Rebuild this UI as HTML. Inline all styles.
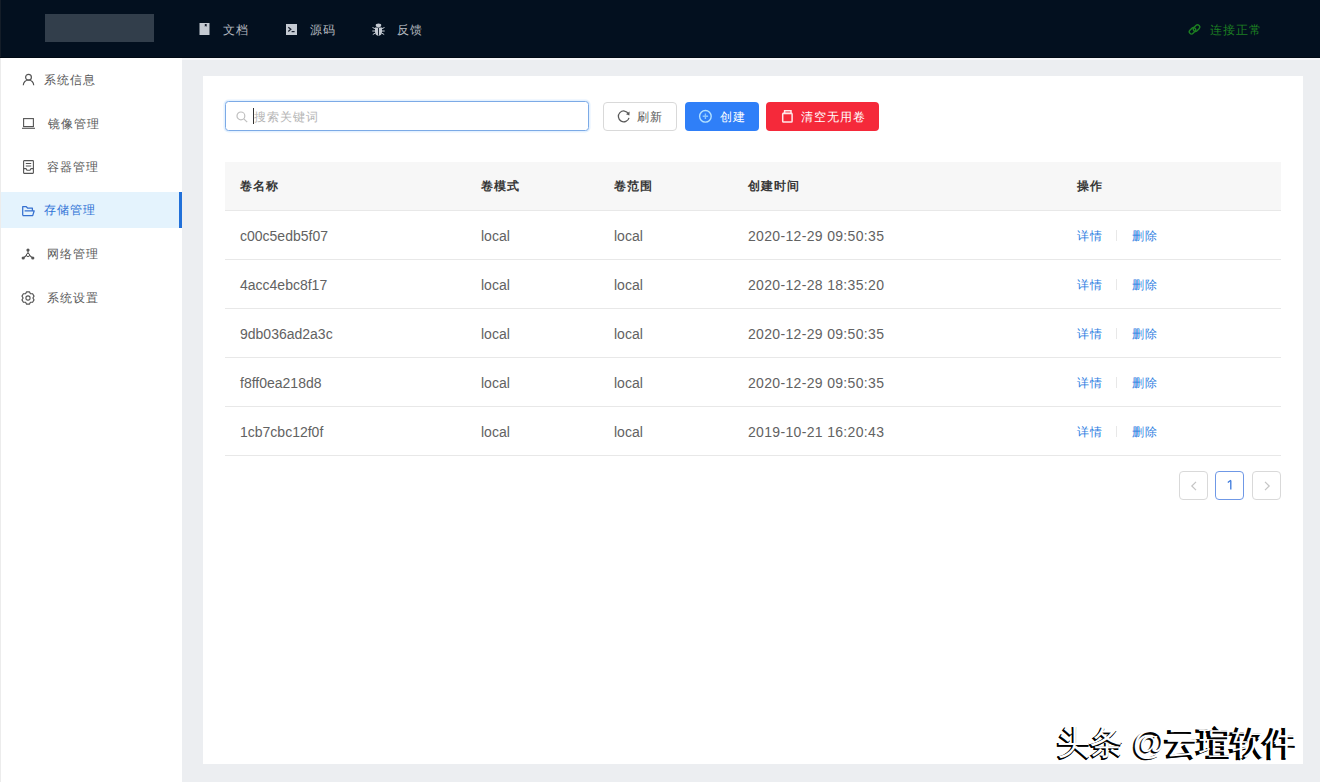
<!DOCTYPE html>
<html><head><meta charset="utf-8">
<style>
*{box-sizing:border-box;margin:0;padding:0}
html,body{width:1320px;height:782px;overflow:hidden;background:#eceef1;font-family:"Liberation Sans",sans-serif;font-size:14px;color:#595959}
.a{position:absolute;white-space:nowrap}
.cj{font-size:12px;line-height:16px;letter-spacing:.9px}
#hdr{position:absolute;left:0;top:0;width:1320px;height:58px;background:#03101f}
#logo{position:absolute;left:45px;top:14px;width:109px;height:28px;background:#323e4b}
.nav{color:#b3b8bf;top:22px}
#side{position:absolute;left:0;top:58px;width:182px;height:724px;background:#fff}
.mt{left:47px}
#card{position:absolute;left:203px;top:76px;width:1100px;height:688px;background:#fff}
#search{position:absolute;left:224.5px;top:101px;width:364.5px;height:30px;border:1.8px solid #7caae6;border-radius:3.5px;box-shadow:0 0 0 1.5px rgba(150,205,255,.25);background:#fff}
.btn{position:absolute;top:102px;height:29px;border-radius:4px}
.th{font-weight:bold;color:#383838;top:178px}
.row{position:absolute;left:225px;width:1056px;height:49px;border-bottom:1px solid #e8e8e8}
.c{position:absolute;top:17px;line-height:16px;white-space:nowrap;color:#626262}
.dt{letter-spacing:.33px}
.lk{color:#2a7de1;font-size:12px;letter-spacing:.9px;top:17px}
.sep{position:absolute;left:891px;top:19px;width:1px;height:11px;background:#e8e8e8}
.pg{position:absolute;top:471px;width:29px;height:29px;border:1px solid #d9d9d9;border-radius:4px}
</style></head><body>
<div id="hdr">
  <div id="logo"></div>
  <svg class="a" style="left:199px;top:23px" width="11" height="12" viewBox="0 0 11 12"><rect x="0.5" y="0" width="10" height="12" fill="#c4cad2"/><path d="M5.8 0.9h1.9v2.8L6.75 3 5.8 3.7z" fill="#1a2230"/></svg>
  <div class="a cj nav" style="left:223px">文档</div>
  <svg class="a" style="left:286px;top:24px" width="11" height="11" viewBox="0 0 11 11"><rect width="11" height="11" fill="#c4cad2"/><path d="M2.3 3.2 4.8 5.3 2.3 7.4" stroke="#1a2230" stroke-width="1.3" fill="none"/><rect x="5.6" y="7" width="3" height="1.2" fill="#1a2230"/></svg>
  <div class="a cj nav" style="left:310px">源码</div>
  <svg class="a" style="left:372px;top:23px" width="13" height="13" viewBox="0 0 13 13"><ellipse cx="6.5" cy="2.3" rx="2.8" ry="1.9" fill="#c4cad2"/><path d="M3 4.6h7v4.4c0 2.2-1.6 3.8-3.5 3.8S3 11.2 3 9z" fill="#c4cad2"/><path d="M6.5 5v7.5" stroke="#03101f" stroke-width=".9"/><path d="M0.5 4.5 3 5.6M12.5 4.5 10 5.6M0.3 8h2.7M12.7 8H10M0.8 11.5 3.2 10.2M12.2 11.5 9.8 10.2" stroke="#c4cad2" stroke-width="1"/></svg>
  <div class="a cj nav" style="left:397px">反馈</div>
  <svg class="a" style="left:1188px;top:23px" width="13" height="13" viewBox="0 0 13 13"><g fill="none" stroke="#1d7f22" stroke-width="1.4"><rect x="0.9" y="5.6" width="7.2" height="4.4" rx="2.2" transform="rotate(-45 4.5 7.8)"/><rect x="4.9" y="2.9" width="7.2" height="4.4" rx="2.2" transform="rotate(-45 8.5 5.1)"/></g></svg>
  <div class="a cj" style="left:1210px;top:22px;color:#1d7f22">连接正常</div>
</div>
<div id="side">
  <svg class="a" style="left:22px;top:15px" width="13" height="13" viewBox="0 0 13 13"><g fill="none" stroke="#555" stroke-width="1.2"><circle cx="6.5" cy="4.3" r="2.9"/><path d="M1.3 12.2a5.2 5.2 0 0 1 10.4 0"/></g></svg>
  <div class="a cj" style="left:44px;top:14px">系统信息</div>
  <svg class="a" style="left:22px;top:60px" width="13" height="11" viewBox="0 0 13 11"><g fill="none" stroke="#555" stroke-width="1.1"><rect x="1.6" y="0.6" width="9.8" height="8"/><path d="M0 10.3h13"/></g><rect x="1.5" y="8" width="10" height="1" fill="#555"/></svg>
  <div class="a cj mt" style="left:48px;top:58px">镜像管理</div>
  <svg class="a" style="left:23px;top:102px" width="11" height="14" viewBox="0 0 11 14"><g fill="none" stroke="#555" stroke-width="1.1"><rect x="0.6" y="0.6" width="9.8" height="12.8" rx=".6"/><path d="M2.8 3.5h5.4M2.8 6h5.4M0.6 8.6h2.4l1 1.6h3l1-1.6h2.4"/></g></svg>
  <div class="a cj mt" style="left:47px;top:101px">容器管理</div>
  <div class="a" style="left:0;top:134px;width:182px;height:36px;background:#e4f3fd"></div>
  <div class="a" style="left:179px;top:134px;width:3px;height:36px;background:#2170d9"></div>
  <svg class="a" style="left:21.5px;top:147.5px" width="14" height="11" viewBox="0 0 14 11"><path d="M0.7 9.6V0.7h3.6l1.5 1.5h4.6v2.5M2.6 4.8H12.2L10.7 9.6H0.7" fill="none" stroke="#3570d0" stroke-width="1.25" stroke-linejoin="round"/></svg>
  <div class="a cj" style="left:44px;top:144px;color:#2f72d6">存储管理</div>
  <svg class="a" style="left:21px;top:190px" width="14" height="12" viewBox="0 0 14 12"><g fill="none" stroke="#555" stroke-width="1.1"><path d="M7 2.8v3.2M7 6 3 9.5M7 6l4 3.5"/></g><g fill="#555"><circle cx="7" cy="2" r="1.6"/><circle cx="2.2" cy="10" r="1.6"/><circle cx="11.8" cy="10" r="1.6"/></g><circle cx="7" cy="7" r="1.6" fill="#fff" stroke="#555" stroke-width="1"/></svg>
  <div class="a cj mt" style="left:47px;top:188px">网络管理</div>
  <svg class="a" style="left:21px;top:233px" width="14" height="14" viewBox="0 0 14 14"><path d="M5.58 0.86 L8.42 0.86 L9.45 2.76 L11.61 2.70 L13.02 5.16 L11.90 7.00 L13.02 8.84 L11.61 11.30 L9.45 11.24 L8.42 13.14 L5.58 13.14 L4.55 11.24 L2.39 11.30 L0.98 8.84 L2.10 7.00 L0.98 5.16 L2.39 2.70 L4.55 2.76Z" fill="none" stroke="#555" stroke-width="1.15" stroke-linejoin="round"/><circle cx="7" cy="7" r="2.1" fill="none" stroke="#555" stroke-width="1.1"/></svg>
  <div class="a cj mt" style="left:47px;top:232px">系统设置</div>
</div>
<div id="card"></div>
<div class="a" style="left:182px;top:58px;width:1138px;height:2px;background:#f6f7f9"></div>
<div class="a" style="left:0;top:58px;width:1px;height:724px;background:#ececec"></div>
<div class="a" style="left:0;top:0;width:1px;height:58px;background:#141d28"></div>
<div class="a" style="left:0;top:57px;width:1320px;height:1px;background:#010a14"></div>
<div id="search"></div>
<svg class="a" style="left:236px;top:111px" width="12" height="12" viewBox="0 0 12 12"><g fill="none" stroke="#bfbfbf" stroke-width="1.2"><circle cx="4.9" cy="4.9" r="3.9"/><path d="M7.8 7.8 11.2 11.2"/></g></svg>
<div class="a" style="left:253px;top:108px;width:1px;height:16px;background:#333"></div>
<div class="a cj" style="left:254px;top:109px;color:#b5b5b5">搜索关键词</div>
<div class="btn" style="left:603px;width:74px;border:1px solid #d9d9d9;background:#fff"></div>
<svg class="a" style="left:612px;top:105px" width="24" height="22" viewBox="0 0 24 22"><path d="M16.4 8.6A5.4 5.4 0 1 0 17 12.8" fill="none" stroke="#595959" stroke-width="1.25"/><path d="M17.6 6.6 17.4 10.4 14 9.2Z" fill="#595959"/></svg>
<div class="a cj" style="left:637px;top:109px">刷新</div>
<div class="btn" style="left:685px;width:74px;background:#2f7ff8"></div>
<svg class="a" style="left:694px;top:105px" width="22" height="22" viewBox="0 0 22 22"><circle cx="11.4" cy="11.3" r="5.8" fill="none" stroke="#b4e2ff" stroke-width="1.4"/><path d="M11.4 8.6v5.4M8.7 11.3h5.4" stroke="#8cc6ff" stroke-width="1.4"/></svg>
<div class="a cj" style="left:720px;top:109px;color:#fff">创建</div>
<div class="btn" style="left:766px;width:113px;background:#f5293a"></div>
<svg class="a" style="left:776px;top:106px" width="22" height="20" viewBox="0 0 22 20"><g fill="none" stroke="#ffe8ea" stroke-width="1.5"><rect x="6.7" y="7.4" width="9.4" height="8.6" rx=".8"/><path d="M8.6 7.2V4.8h6.4v2.4"/><path d="M6.6 7.3h9.6"/></g></svg>
<div class="a cj" style="left:801px;top:109px;color:#fff">清空无用卷</div>
<div class="a" style="left:225px;top:162px;width:1056px;height:49px;background:#f7f7f7;border-bottom:1px solid #e8e8e8"></div>
<div class="a cj th" style="left:240px">卷名称</div>
<div class="a cj th" style="left:481px">卷模式</div>
<div class="a cj th" style="left:614px">卷范围</div>
<div class="a cj th" style="left:748px">创建时间</div>
<div class="a cj th" style="left:1077px">操作</div>
<div class="row" style="top:211px"><span class="c" style="left:15px">c00c5edb5f07</span><span class="c" style="left:256px">local</span><span class="c" style="left:389px">local</span><span class="c dt" style="left:523px">2020-12-29 09:50:35</span><span class="c lk" style="left:852px">详情</span><i class="sep"></i><span class="c lk" style="left:907px">删除</span></div>
<div class="row" style="top:260px"><span class="c" style="left:15px">4acc4ebc8f17</span><span class="c" style="left:256px">local</span><span class="c" style="left:389px">local</span><span class="c dt" style="left:523px">2020-12-28 18:35:20</span><span class="c lk" style="left:852px">详情</span><i class="sep"></i><span class="c lk" style="left:907px">删除</span></div>
<div class="row" style="top:309px"><span class="c" style="left:15px">9db036ad2a3c</span><span class="c" style="left:256px">local</span><span class="c" style="left:389px">local</span><span class="c dt" style="left:523px">2020-12-29 09:50:35</span><span class="c lk" style="left:852px">详情</span><i class="sep"></i><span class="c lk" style="left:907px">删除</span></div>
<div class="row" style="top:358px"><span class="c" style="left:15px">f8ff0ea218d8</span><span class="c" style="left:256px">local</span><span class="c" style="left:389px">local</span><span class="c dt" style="left:523px">2020-12-29 09:50:35</span><span class="c lk" style="left:852px">详情</span><i class="sep"></i><span class="c lk" style="left:907px">删除</span></div>
<div class="row" style="top:407px"><span class="c" style="left:15px">1cb7cbc12f0f</span><span class="c" style="left:256px">local</span><span class="c" style="left:389px">local</span><span class="c dt" style="left:523px">2019-10-21 16:20:43</span><span class="c lk" style="left:852px">详情</span><i class="sep"></i><span class="c lk" style="left:907px">删除</span></div>

<div class="pg" style="left:1179px"></div>
<div class="pg" style="left:1215px;border-color:#6f98e6"></div>
<div class="pg" style="left:1252px"></div>
<svg class="a" style="left:1190px;top:481px" width="8" height="10" viewBox="0 0 8 10"><path d="M6 0.8 1.8 5 6 9.2" fill="none" stroke="#c4c4c4" stroke-width="1.2"/></svg>
<svg class="a" style="left:1226px;top:479px" width="8" height="12" viewBox="0 0 8 12"><path d="M4.8 1.4V10.6" stroke="#3a78dc" stroke-width="1.3"/><path d="M1.8 3.6 4.8 1.3" stroke="#3a78dc" stroke-width="1.2"/></svg>
<svg class="a" style="left:1263px;top:481px" width="8" height="10" viewBox="0 0 8 10"><path d="M2 0.8 6.2 5 2 9.2" fill="none" stroke="#c4c4c4" stroke-width="1.2"/></svg>
<div class="a" style="left:1056px;top:724px;font-size:33px;line-height:40px;color:#000;font-weight:bold;-webkit-text-stroke:.5px #000">头条 @云瑄软件</div>
<div class="a" style="left:1057px;top:722.5px;font-size:33px;line-height:40px;color:#fff">头条 @云瑄软件</div>
</body></html>
